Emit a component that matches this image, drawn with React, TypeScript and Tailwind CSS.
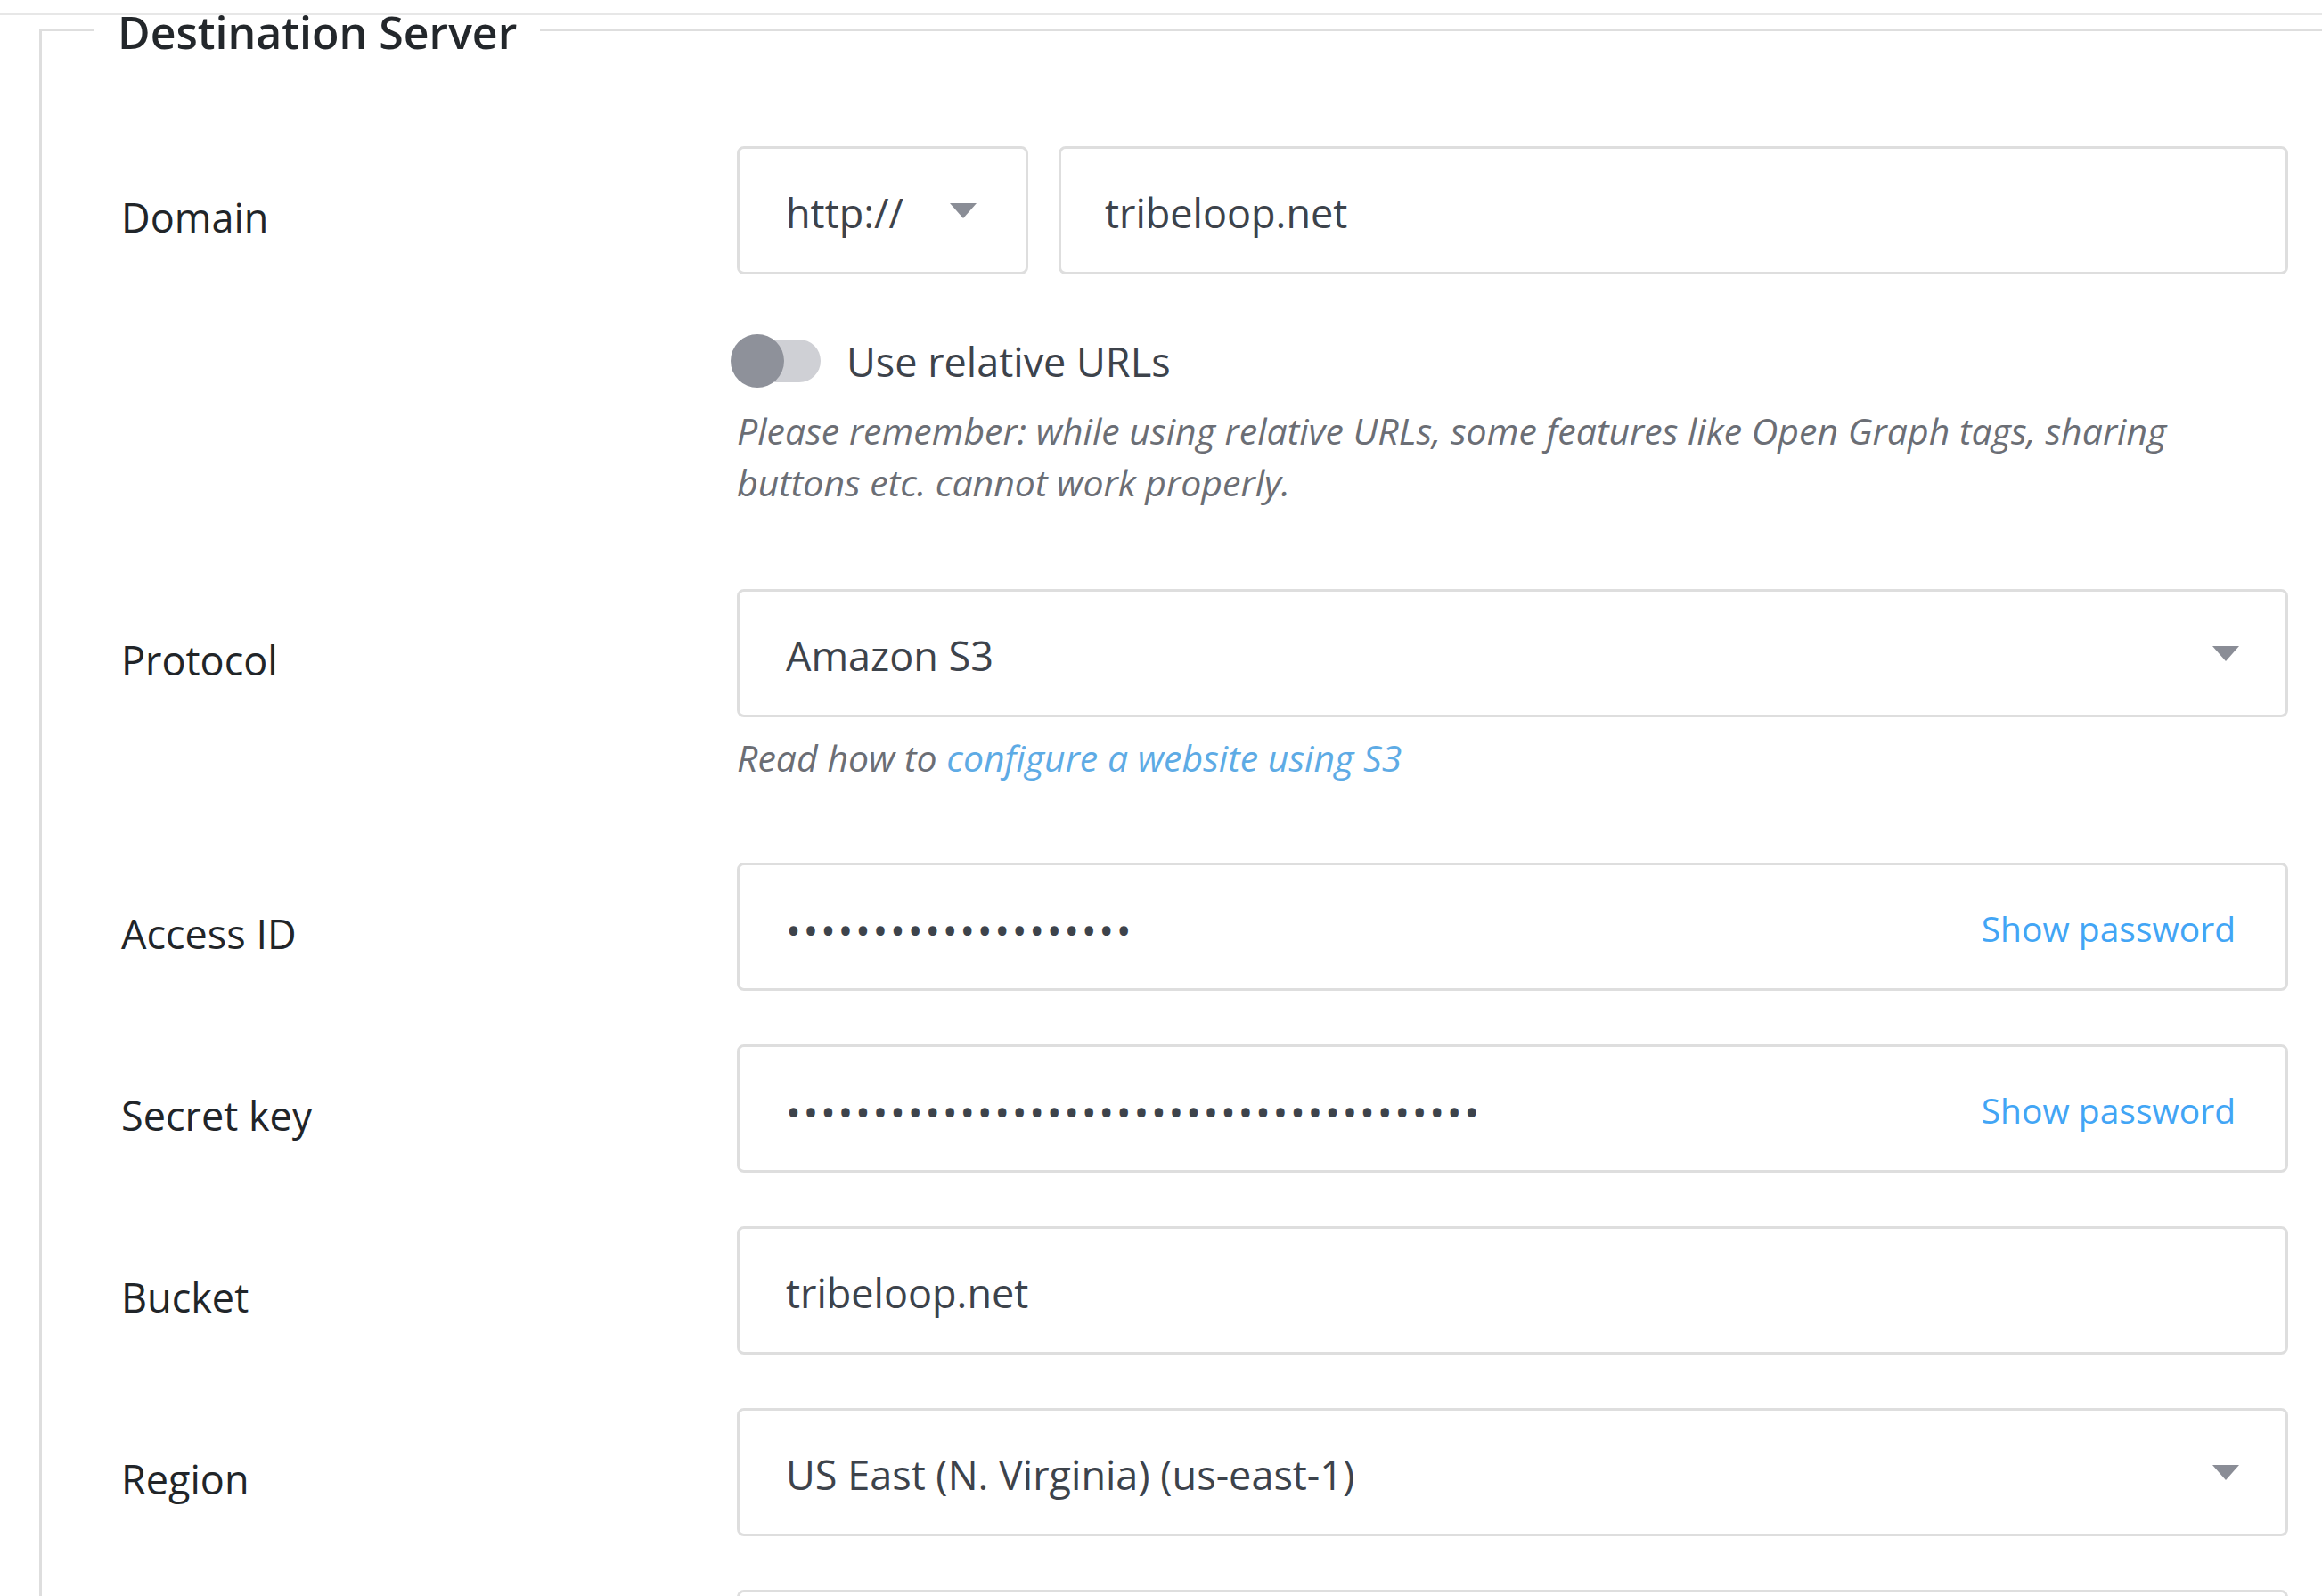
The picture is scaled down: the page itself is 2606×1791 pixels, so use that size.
import React from "react";

function Caret() {
  return (
    <svg width="30" height="17" viewBox="0 0 30 17" className="shrink-0">
      <path d="M0 0 L30 0 L15 17 Z" fill="#8a8d96" />
    </svg>
  );
}

function FieldLabel({ children }: { children: React.ReactNode }) {
  return (
    <div className="pt-[46px] text-[45px] leading-[1.5] text-[#212529]">
      {children}
    </div>
  );
}

function Box({
  children,
  className = "",
}: {
  children?: React.ReactNode;
  className?: string;
}) {
  return (
    <div
      className={`flex h-[144px] items-center rounded-[8px] border-[3px] border-[#dedede] bg-white text-[45px] leading-[1.5] text-[#3d434b] ${className}`}
    >
      {children}
    </div>
  );
}

function Value({ children }: { children: React.ReactNode }) {
  return <span className="pt-[5px]">{children}</span>;
}

function PasswordBox({ count }: { count: number }) {
  return (
    <Box className="justify-between pl-[52px] pr-[56px]">
      <span className="pt-[8px] text-[45px] tracking-[2.6px] text-[#3d434b]">
        {"•".repeat(count)}
      </span>
      <span className="pt-[5px] text-[39px] text-[#42a5f5]">Show password</span>
    </Box>
  );
}

function Row({
  label,
  children,
  className = "",
}: {
  label: string;
  children: React.ReactNode;
  className?: string;
}) {
  return (
    <div className={`grid grid-cols-[691px_1741px] ${className}`}>
      <FieldLabel>{label}</FieldLabel>
      <div>{children}</div>
    </div>
  );
}

export default function App() {
  return (
    <div className="h-[1791px] w-[2606px] overflow-hidden bg-white font-['Open_Sans','Noto_Sans',sans-serif]">
      <div className="pt-[15px]">
        <div className="h-[2px] bg-[#e7e7e7]" />
      </div>
      <fieldset className="-mt-[17px] ml-[44px] w-[2640px] border-[3px] border-[#dedede] pb-[200px]">
        <legend className="ml-[59px] px-[26px] pt-[6px] text-[50px] font-semibold leading-[1.2] text-[#23272b]">
          Destination Server
        </legend>

        <div className="flex flex-col pl-[89px] pt-[98px]">
          <Row label="Domain">
            <div className="flex gap-[34px]">
              <Box className="w-[327px] shrink-0 justify-between pl-[52px] pr-[55px]">
                <Value>http://</Value>
                <Caret />
              </Box>
              <Box className="flex-1 pl-[49px]">
                <Value>tribeloop.net</Value>
              </Box>
            </div>
            <div className="-ml-[7px] mt-[67px] flex h-[60px] items-center gap-[29px]">
              <div className="flex w-[101px] items-center">
                <div className="ml-[5px] h-[48px] w-[96px] shrink-0 rounded-full bg-[#cfd0d5]" />
                <div className="-ml-[101px] h-[60px] w-[60px] shrink-0 rounded-full bg-[#8e919a]" />
              </div>
              <span className="pt-[2px] text-[45px] leading-[1.5] text-[#3d434b]">
                Use relative URLs
              </span>
            </div>
            <p className="mt-[19px] max-w-[1690px] text-[41px] italic leading-[58px] text-[#6b6e75]">
              Please remember: while using relative URLs, some features like
              Open Graph tags, sharing buttons etc. cannot work properly.
            </p>
          </Row>

          <Row label="Protocol" className="mt-[91px]">
            <Box className="justify-between pl-[52px] pr-[52px]">
              <Value>Amazon S3</Value>
              <Caret />
            </Box>
            <p className="mt-[16px] text-[41px] italic leading-[58px] text-[#6b6e75]">
              Read how to{" "}
              <a className="text-[#5eabe5]">configure a website using S3</a>
            </p>
          </Row>

          <Row label="Access ID" className="mt-[89px]">
            <PasswordBox count={20} />
          </Row>

          <Row label="Secret key" className="mt-[60px]">
            <PasswordBox count={40} />
          </Row>

          <Row label="Bucket" className="mt-[60px]">
            <Box className="pl-[52px]">
              <Value>tribeloop.net</Value>
            </Box>
          </Row>

          <Row label="Region" className="mt-[60px]">
            <Box className="justify-between pl-[52px] pr-[52px]">
              <Value>US East (N. Virginia) (us-east-1)</Value>
              <Caret />
            </Box>
          </Row>

          <Row label="" className="mt-[60px]">
            <Box className="pl-[52px]" />
          </Row>
        </div>
      </fieldset>
    </div>
  );
}
